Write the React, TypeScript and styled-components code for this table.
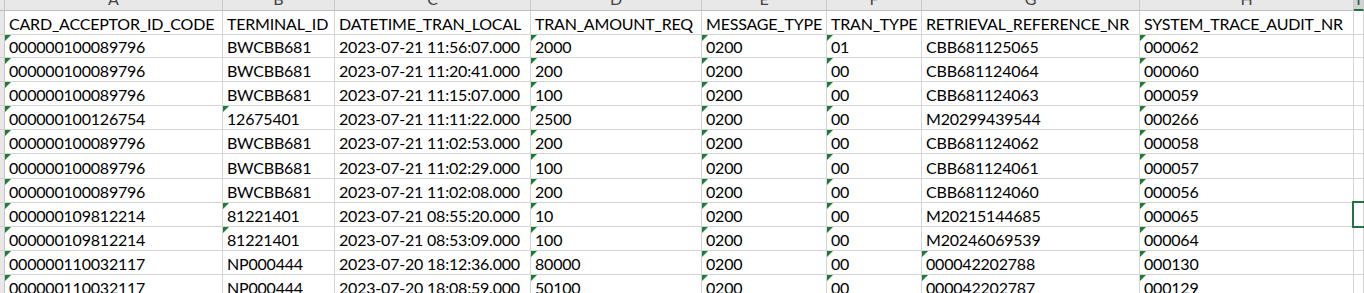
import React from "react";
import styled, { createGlobalStyle, css } from "styled-components";

const GlobalStyle = createGlobalStyle`
  html, body { margin: 0; padding: 0; background: #ffffff; }
  body { font-family: Lato, "Liberation Sans", sans-serif; }
`;

const GRID = "#d4d4d4";
const HEAD_BG = "#e8e8e8";
const HEAD_SEL = "#d2d2d2";
const GREEN = "#217346";
const FLAG = "#1d7d35";

const colWidths = [5, 218, 112, 196, 171, 125, 95, 218, 214];
const rowHeights = [11, 24, 23, 24, 24, 24, 24, 25, 24, 24, 24, 24, 24];

const letters = ["A", "B", "C", "D", "E", "F", "G", "H", "I"];

const header = [
  "CARD_ACCEPTOR_ID_CODE",
  "TERMINAL_ID",
  "DATETIME_TRAN_LOCAL",
  "TRAN_AMOUNT_REQ",
  "MESSAGE_TYPE",
  "TRAN_TYPE",
  "RETRIEVAL_REFERENCE_NR",
  "SYSTEM_TRACE_AUDIT_NR",
];

const data: string[][] = [
  ["000000100089796", "BWCBB681", "2023-07-21 11:56:07.000", "2000", "0200", "01", "CBB681125065", "000062"],
  ["000000100089796", "BWCBB681", "2023-07-21 11:20:41.000", "200", "0200", "00", "CBB681124064", "000060"],
  ["000000100089796", "BWCBB681", "2023-07-21 11:15:07.000", "100", "0200", "00", "CBB681124063", "000059"],
  ["000000100126754", "12675401", "2023-07-21 11:11:22.000", "2500", "0200", "00", "M20299439544", "000266"],
  ["000000100089796", "BWCBB681", "2023-07-21 11:02:53.000", "200", "0200", "00", "CBB681124062", "000058"],
  ["000000100089796", "BWCBB681", "2023-07-21 11:02:29.000", "100", "0200", "00", "CBB681124061", "000057"],
  ["000000100089796", "BWCBB681", "2023-07-21 11:02:08.000", "200", "0200", "00", "CBB681124060", "000056"],
  ["000000109812214", "81221401", "2023-07-21 08:55:20.000", "10", "0200", "00", "M20215144685", "000065"],
  ["000000109812214", "81221401", "2023-07-21 08:53:09.000", "100", "0200", "00", "M20246069539", "000064"],
  ["000000110032117", "NP000444", "2023-07-20 18:12:36.000", "80000", "0200", "00", "000042202788", "000130"],
  ["000000110032117", "NP000444", "2023-07-20 18:08:59.000", "50100", "0200", "00", "000042202787", "000129"],
];

const SELECTED_ROW = 7; // data index of selected row (column I)

const Sheet = styled.div<{ $cols: string; $rows: string }>`
  display: grid;
  grid-template-columns: ${(p) => p.$cols};
  grid-template-rows: ${(p) => p.$rows};
  width: 1364px;
  height: 293px;
  overflow: hidden;
  background: #ffffff;
`;

const Corner = styled.div`
  box-sizing: border-box;
  background: ${HEAD_BG};
  border-right: 1px solid #c6c6c6;
  border-bottom: 1px solid #bdbdbd;
`;

const RowHead = styled.div`
  box-sizing: border-box;
  background: ${HEAD_BG};
  border-right: 1px solid #c6c6c6;
  border-bottom: 1px solid #d0d0d0;
`;

const ColHead = styled.div<{ $selected?: boolean }>`
  box-sizing: border-box;
  display: flex;
  align-items: flex-end;
  justify-content: center;
  overflow: hidden;
  padding-bottom: 3px;
  background: ${(p) => (p.$selected ? HEAD_SEL : HEAD_BG)};
  border-right: 1px solid #c9c9c9;
  border-bottom: 1px solid #bdbdbd;
  font-size: 16px;
  line-height: 17px;
  color: ${(p) => (p.$selected ? "#1a5c38" : "#444444")};
  ${(p) =>
    p.$selected &&
    css`
      border-bottom: 2px solid ${GREEN};
      padding-bottom: 2px;
    `}
`;

const Cell = styled.div<{ $flag?: boolean }>`
  position: relative;
  box-sizing: border-box;
  display: flex;
  align-items: flex-end;
  overflow: hidden;
  white-space: nowrap;
  padding: 0 4px 2px 4px;
  border-right: 1px solid ${GRID};
  border-bottom: 1px solid ${GRID};
  font-size: 16px;
  letter-spacing: -0.2px;
  line-height: 17px;
  color: #000000;
  ${(p) =>
    p.$flag &&
    css`
      &::before {
        content: "";
        position: absolute;
        left: 0;
        top: 0;
        width: 0;
        height: 0;
        border-top: 6px solid ${FLAG};
        border-right: 6px solid transparent;
      }
    `}
`;

const SelectedCell = styled(Cell)`
  overflow: visible;
  z-index: 2;
`;

const SelectionBox = styled.div`
  position: absolute;
  left: -2px;
  top: -2px;
  right: -40px;
  bottom: -2px;
  border: 2px solid ${GREEN};
  pointer-events: none;
`;

const isNumericText = (s: string) => /^\d+$/.test(s);

export default function App() {
  const cols = colWidths.map((w) => `${w}px`).join(" ") + " 1fr";
  const rows = rowHeights.map((h) => `${h}px`).join(" ");

  return (
    <>
      <GlobalStyle />
      <Sheet $cols={cols} $rows={rows}>
        <Corner />
        {letters.map((l) => (
          <ColHead key={l} $selected={l === "I"}>
            {l}
          </ColHead>
        ))}

        <RowHead />
        {header.map((h) => (
          <Cell key={h}>{h}</Cell>
        ))}
        <Cell />

        {data.map((row, ri) => (
          <React.Fragment key={ri}>
            <RowHead />
            {row.map((v, ci) => (
              <Cell key={ci} $flag={isNumericText(v)}>
                {v}
              </Cell>
            ))}
            {ri === SELECTED_ROW ? (
              <SelectedCell>
                <SelectionBox />
              </SelectedCell>
            ) : (
              <Cell />
            )}
          </React.Fragment>
        ))}
      </Sheet>
    </>
  );
}
